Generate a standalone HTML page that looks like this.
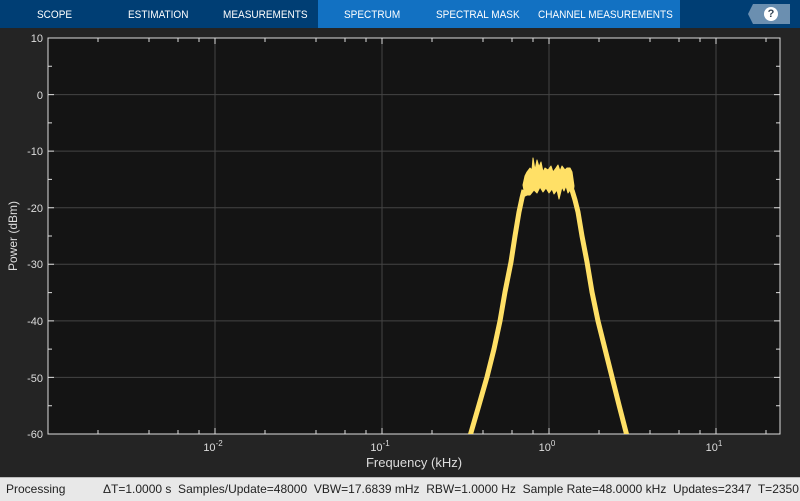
<!DOCTYPE html>
<html><head><meta charset="utf-8"><style>
body{margin:0;width:800px;height:500px;background:#242424;font-family:"Liberation Sans",sans-serif;overflow:hidden;position:relative}
.top{position:absolute;left:0;top:0;width:800px;height:28px;background:#003e74}
.sel{position:absolute;left:318px;top:0;width:362px;height:28px;background:#1271c2}
.tab{position:absolute;top:0;height:28px;line-height:30px;color:#fff;font-size:11px;white-space:nowrap;transform:scaleX(0.91);transform-origin:0 0}
.help{position:absolute;left:748px;top:4px;width:42px;height:20px;background:#6b8fb0;clip-path:polygon(5px 0,100% 0,100% 100%,5px 100%,0 50%)}
.help div{position:absolute;left:16px;top:3px;width:14px;height:14px;border-radius:50%;background:#fff;color:#345;font-size:11px;font-weight:bold;text-align:center;line-height:14px}
.status{position:absolute;left:0;top:477px;width:800px;height:23px;background:#e8e8e8;border-top:1px solid #bbb;font-size:12px;color:#222;line-height:23px;white-space:nowrap;overflow:hidden}
</style></head><body>
<div class="top"></div><div class="sel"></div>
<div class="tab" style="left:37px">SCOPE</div>
<div class="tab" style="left:128px">ESTIMATION</div>
<div class="tab" style="left:223px">MEASUREMENTS</div>
<div class="tab" style="left:344px">SPECTRUM</div>
<div class="tab" style="left:436px">SPECTRAL MASK</div>
<div class="tab" style="left:538px">CHANNEL MEASUREMENTS</div>
<div class="help"><div>?</div></div>
<svg width="800" height="500" style="position:absolute;left:0;top:0" font-family="Liberation Sans" font-size="11" fill="#ddd">
<rect x="48" y="38" width="732" height="396" fill="#141414"/>
<g stroke="#444" stroke-width="1">
<line x1="215" y1="38" x2="215" y2="434"/><line x1="382" y1="38" x2="382" y2="434"/><line x1="549" y1="38" x2="549" y2="434"/><line x1="716" y1="38" x2="716" y2="434"/>
<line x1="48" y1="94.6" x2="780" y2="94.6"/><line x1="48" y1="151.1" x2="780" y2="151.1"/><line x1="48" y1="207.7" x2="780" y2="207.7"/><line x1="48" y1="264.3" x2="780" y2="264.3"/><line x1="48" y1="320.9" x2="780" y2="320.9"/><line x1="48" y1="377.4" x2="780" y2="377.4"/>
</g>
<g stroke="#ddd" stroke-width="1">
<path d="M98,38v4M149,38v4M178,38v4M199,38v4M265,38v4M316,38v4M345,38v4M366,38v4M432,38v4M483,38v4M512,38v4M533,38v4M599,38v4M650,38v4M679,38v4M700,38v4M766,38v4
M98,434v-4M149,434v-4M178,434v-4M199,434v-4M265,434v-4M316,434v-4M345,434v-4M366,434v-4M432,434v-4M483,434v-4M512,434v-4M533,434v-4M599,434v-4M650,434v-4M679,434v-4M700,434v-4M766,434v-4
M215,38v6M382,38v6M549,38v6M716,38v6M215,434v-6M382,434v-6M549,434v-6M716,434v-6
M48,66.3h4M48,122.9h4M48,179.4h4M48,236h4M48,292.6h4M48,349.1h4M48,405.7h4
M48,94.6h6M48,151.1h6M48,207.7h6M48,264.3h6M48,320.9h6M48,377.4h6
M780,66.3h-4M780,122.9h-4M780,179.4h-4M780,236h-4M780,292.6h-4M780,349.1h-4M780,405.7h-4
M780,94.6h-6M780,151.1h-6M780,207.7h-6M780,264.3h-6M780,320.9h-6M780,377.4h-6"/>
</g>
<rect x="48" y="38" width="732" height="396" fill="none" stroke="#ddd" stroke-width="1"/>
<g text-anchor="end">
<text x="43" y="42">10</text><text x="43" y="99">0</text><text x="43" y="155">-10</text><text x="43" y="212">-20</text><text x="43" y="268">-30</text><text x="43" y="325">-40</text><text x="43" y="382">-50</text><text x="43" y="438">-60</text>
</g>
<g text-anchor="middle"><text x="213" y="451">10<tspan dy="-5" font-size="8">-2</tspan></text><text x="380" y="451">10<tspan dy="-5" font-size="8">-1</tspan></text><text x="547" y="451">10<tspan dy="-5" font-size="8">0</tspan></text><text x="714" y="451">10<tspan dy="-5" font-size="8">1</tspan></text></g>
<text x="414" y="467" text-anchor="middle" font-size="13">Frequency (kHz)</text>
<text transform="translate(17,236) rotate(-90)" text-anchor="middle" font-size="12">Power (dBm)</text>
<clipPath id="c"><rect x="48" y="38" width="732" height="396"/></clipPath>
<g clip-path="url(#c)" fill="none" stroke="#ffe066" stroke-linejoin="round">
<polyline stroke-width="5" points="470,436 479,405 487,377 494,349 500,321 505,292 511,262 515,236 519,212 522,198 524,190"/>
<polyline stroke-width="5" points="572,190 575,200 578,212 582,236 587,262 592,292 598,321 605,349 612,377 619,405 627,436"/>
<polygon fill="#ffe066" stroke-width="1" points="523,185 525,176 527,172 530,168 532,170 533,158 535,170 537,160 539,167 541,162 543,172 545,168 548,170 551,166 553,172 556,168 558,165 560,171 562,166 565,170 567,168 570,168 572,172 574,186 573,194 570,190 568,193 566,186 564,191 562,187 559,199 557,190 554,194 552,189 549,193 546,188 543,192 540,187 537,193 534,190 530,195 527,195 525,196"/>
</g>
</svg>
<div class="status"><span style="position:absolute;left:6px">Processing</span><span style="position:absolute;left:103px">ΔT=1.0000 s&nbsp; Samples/Update=48000&nbsp; VBW=17.6839 mHz&nbsp; RBW=1.0000 Hz&nbsp; Sample Rate=48.0000 kHz&nbsp; Updates=2347&nbsp; T=2350.0</span></div>
</body></html>
